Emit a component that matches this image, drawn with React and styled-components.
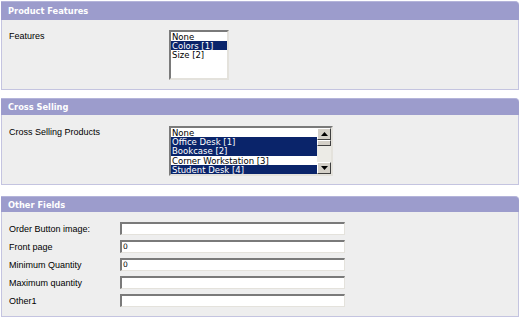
import React from "react";
import styled, { createGlobalStyle } from "styled-components";

const GlobalStyle = createGlobalStyle`
  html, body { margin: 0; padding: 0; background: #ffffff; }
  body { font-family: "Liberation Sans", Arial, sans-serif; }
`;

const Page = styled.div`
  padding: 1px 1px 0 1px;
  display: flex;
  flex-direction: column;
`;

const Panel = styled.section`
  display: flex;
  flex-direction: column;
  margin-top: ${(p) => p.$mt || 0}px;
`;

const PanelHeader = styled.h2`
  margin: 0;
  height: ${(p) => p.$h || 18}px;
  line-height: ${(p) => p.$h || 18}px;
  padding-left: 7px;
  background: #9c9ccc;
  border-top: 1px solid #b4b4da;
  border-radius: 0 4px 0 0;
  color: #ffffff;
  font-family: "DejaVu Sans Condensed", "DejaVu Sans", Verdana, sans-serif;
  font-size: 9.2px;
  font-weight: bold;
`;

const PanelBody = styled.div`
  background: #eeeeee;
  border: 1px solid #c4c4e0;
  border-top: none;
  padding: ${(p) => p.$pad};
  display: flex;
  flex-direction: column;
  gap: ${(p) => p.$gap || 0}px;
`;

const Row = styled.div`
  display: flex;
  align-items: flex-start;
  height: ${(p) => p.$h}px;
`;

const Label = styled.div`
  width: ${(p) => p.$w}px;
  flex: none;
  font-size: 9px;
  color: #000;
  padding-top: ${(p) => p.$pt || 0}px;
  line-height: 12px;
`;

const ListBox = styled.div`
  width: ${(p) => p.$w}px;
  height: 50px;
  box-sizing: border-box;
  background: #ffffff;
  border-top: 2px solid #7a7a7a;
  border-left: 2px solid #7a7a7a;
  border-right: 2px solid #e4e2dc;
  border-bottom: 2px solid #e4e2dc;
  display: flex;
  overflow: hidden;
`;

const Options = styled.div`
  flex: 1;
  display: flex;
  flex-direction: column;
  min-width: 0;
`;

const Option = styled.div`
  height: 9.2px;
  flex: none;
  line-height: 10.4px;
  padding-left: 1px;
  font-family: "DejaVu Sans", Verdana, sans-serif;
  font-size: 8.5px;
  white-space: nowrap;
  background: ${(p) => (p.$sel ? "#0a246a" : "transparent")};
  color: ${(p) => (p.$sel ? "#ffffff" : "#000000")};
`;

const ScrollBar = styled.div`
  width: 14px;
  flex: none;
  display: flex;
  flex-direction: column;
  background: #ecebe6;
`;

const ScrollBtn = styled.div`
  height: 12px;
  box-sizing: border-box;
  background: #d4d0c8;
  border-top: 1px solid #ffffff;
  border-left: 1px solid #ffffff;
  border-right: 1px solid #404040;
  border-bottom: 1px solid #404040;
  display: flex;
  align-items: center;
  justify-content: center;
`;

const Thumb = styled.div`
  height: 6px;
  box-sizing: border-box;
  background: #d4d0c8;
  border-top: 1px solid #ffffff;
  border-left: 1px solid #ffffff;
  border-right: 1px solid #404040;
  border-bottom: 1px solid #404040;
`;

const Track = styled.div`
  flex: 1;
`;

const TextInput = styled.div`
  width: 225px;
  height: 13px;
  box-sizing: border-box;
  background: #ffffff;
  border-top: 2px solid #7a7a7a;
  border-left: 2px solid #7a7a7a;
  border-right: 1px solid #e4e2dc;
  border-bottom: 1px solid #e4e2dc;
  font-family: "DejaVu Sans", Verdana, sans-serif;
  font-size: 7.5px;
  line-height: 10px;
  padding-left: 1px;
  color: #000;
`;

const Arrow = ({ up }) => (
  <svg width="7" height="4" viewBox="0 0 7 4">
    <polygon points={up ? "3.5,0 7,4 0,4" : "0,0 7,0 3.5,4"} fill="#000" />
  </svg>
);

export default function App() {
  const features = [
    { t: "None" },
    { t: "Colors [1]", s: true },
    { t: "Size [2]" },
  ];
  const cross = [
    { t: "None" },
    { t: "Office Desk [1]", s: true },
    { t: "Bookcase [2]", s: true },
    { t: "Corner Workstation [3]" },
    { t: "Student Desk [4]", s: true },
  ];
  const others = [
    { l: "Order Button image:", v: "" },
    { l: "Front page", v: "0" },
    { l: "Minimum Quantity", v: "0" },
    { l: "Maximum quantity", v: "" },
    { l: "Other1", v: "" },
  ];
  return (
    <>
      <GlobalStyle />
      <Page>
        <Panel>
          <PanelHeader>Product Features</PanelHeader>
          <PanelBody $pad="10px 7px 9px">
            <Row $h={50}>
              <Label $w={160}>Features</Label>
              <ListBox $w={60}>
                <Options>
                  {features.map((o) => (
                    <Option key={o.t} $sel={o.s}>{o.t}</Option>
                  ))}
                </Options>
              </ListBox>
            </Row>
          </PanelBody>
        </Panel>
        <Panel $mt={8}>
          <PanelHeader $h={16}>Cross Selling</PanelHeader>
          <PanelBody $pad="11px 7px 8px">
            <Row $h={50}>
              <Label $w={160}>Cross Selling Products</Label>
              <ListBox $w={164}>
                <Options>
                  {cross.map((o) => (
                    <Option key={o.t} $sel={o.s}>{o.t}</Option>
                  ))}
                </Options>
                <ScrollBar>
                  <ScrollBtn><Arrow up /></ScrollBtn>
                  <Thumb />
                  <Track />
                  <ScrollBtn><Arrow /></ScrollBtn>
                </ScrollBar>
              </ListBox>
            </Row>
          </PanelBody>
        </Panel>
        <Panel $mt={11}>
          <PanelHeader $h={15}>Other Fields</PanelHeader>
          <PanelBody $pad="10px 7px 9px" $gap={5}>
            {others.map((o) => (
              <Row key={o.l} $h={13}>
                <Label $w={111} $pt={1}>{o.l}</Label>
                <TextInput>{o.v}</TextInput>
              </Row>
            ))}
          </PanelBody>
        </Panel>
      </Page>
    </>
  );
}
